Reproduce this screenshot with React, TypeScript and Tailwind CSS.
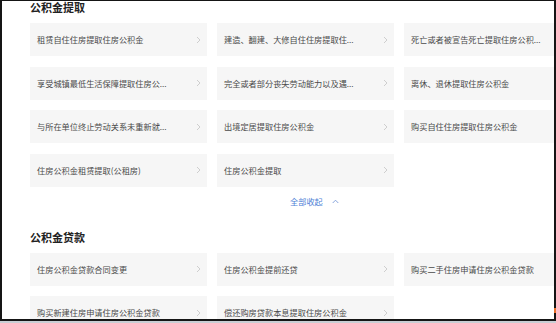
import React from "react";

const withdrawItems = [
  "租赁自住住房提取住房公积金",
  "建造、翻建、大修自住住房提取住...",
  "死亡或者被宣告死亡提取住房公积...",
  "享受城镇最低生活保障提取住房公...",
  "完全或者部分丧失劳动能力以及遇...",
  "离休、退休提取住房公积金",
  "与所在单位终止劳动关系未重新就...",
  "出境定居提取住房公积金",
  "购买自住住房提取住房公积金",
  "住房公积金租赁提取(公租房)",
  "住房公积金提取",
];

const loanItems = [
  "住房公积金贷款合同变更",
  "住房公积金提前还贷",
  "购买二手住房申请住房公积金贷款",
  "购买新建住房申请住房公积金贷款",
  "偿还购房贷款本息提取住房公积金",
];

function Chevron() {
  return (
    <svg width="5" height="8" viewBox="0 0 5 8" fill="none" className="shrink-0">
      <polyline points="1,1 4,4 1,7" stroke="#c9c9c9" strokeWidth="0.9" />
    </svg>
  );
}

function ItemCard({ label }: { label: string }) {
  return (
    <div className="h-[33px] bg-[#f6f6f6] flex items-center justify-between pl-[7px] pr-[6px] cursor-pointer">
      <span className="text-[8.2px] text-[#4a4a4a] whitespace-nowrap">{label}</span>
      <Chevron />
    </div>
  );
}

export default function App() {
  return (
    <div
      className="w-[556px] h-[323px] overflow-hidden bg-[#c9ced4] relative"
      style={{ fontFamily: '"Noto Sans CJK SC", "Noto Sans", sans-serif' }}
    >
      <div className="h-[321px] bg-white border-l-2 border-r-2 border-t border-b-2 border-[#151515] overflow-hidden">
        <div className="pl-[28px] -mt-[1px] w-[600px]">
          {/* 公积金提取 */}
          <h2 className="text-[11px] leading-[14px] font-bold text-[#222] mb-[9px]">公积金提取</h2>
          <div className="grid grid-cols-[177px_177px_177px] gap-x-[10px] gap-y-[10.5px]">
            {withdrawItems.map((item) => (
              <ItemCard key={item} label={item} />
            ))}
          </div>

          {/* toggle */}
          <div className="mt-[9px] pl-[260px] flex items-center gap-[9px] h-[12px]">
            <span className="text-[8.2px] text-[#4d7fd6]">全部收起</span>
            <svg width="7" height="5" viewBox="0 0 7 5" fill="none">
              <polyline points="0.7,4 3.5,1.2 6.3,4" stroke="#7a9bd8" strokeWidth="0.9" />
            </svg>
          </div>

          {/* 公积金贷款 */}
          <h2 className="mt-[22px] text-[11px] leading-[14px] font-bold text-[#222] mb-[9px]">公积金贷款</h2>
          <div className="grid grid-cols-[177px_177px_177px] gap-x-[10px] gap-y-[10.5px]">
            {loanItems.map((item) => (
              <ItemCard key={item} label={item} />
            ))}
          </div>
        </div>
      </div>
      <span className="absolute left-[554px] top-[308px] w-[2px] h-[5px] bg-[#e8702a]" />
    </div>
  );
}
